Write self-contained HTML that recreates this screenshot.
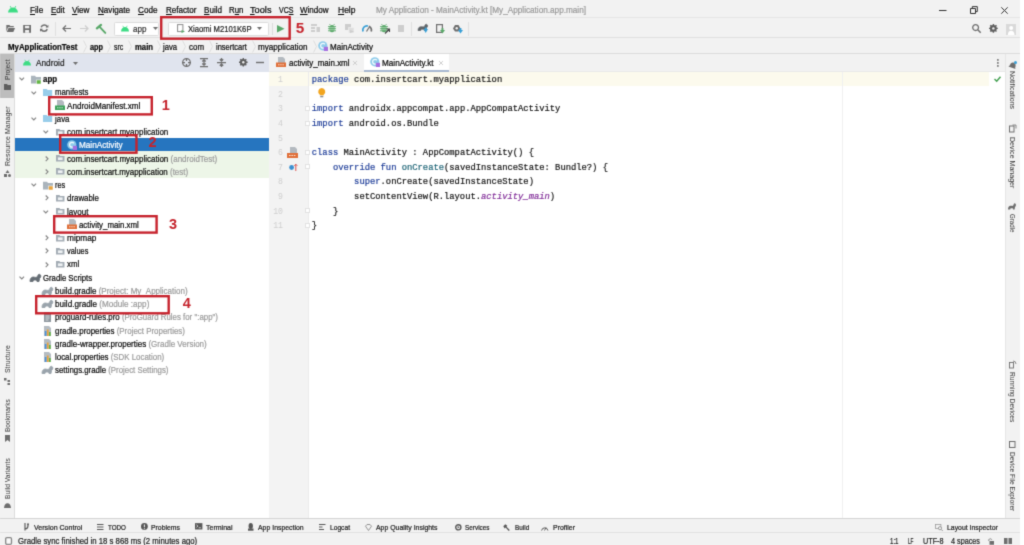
<!DOCTYPE html><html><head><meta charset="utf-8"><title>My Application - MainActivity.kt</title><style>
html,body{margin:0;padding:0}
body{width:1024px;height:545px;overflow:hidden;background:#fff;position:relative;font-family:"Liberation Sans",sans-serif;font-size:8.8px;color:#0a0a0a}
.a{position:absolute}
.t{position:absolute;white-space:pre;line-height:12px;height:12px;transform-origin:0 50%;-webkit-text-stroke:.22px currentColor}
.g{color:#9b9b9b}
.b{font-weight:bold}
.c{position:absolute;white-space:pre;font-family:"Liberation Mono",monospace;font-size:8.82px;line-height:14.61px;height:14.61px;color:#151515;left:311.800px;-webkit-text-stroke:.2px currentColor}
.k{color:#22409a}.f{color:#1f6577}.p{color:#83309a;font-style:italic}
.ln{position:absolute;font-family:"Liberation Mono",monospace;font-size:8.2px;line-height:14.61px;height:14.61px;color:#cfcfcf;width:14px;text-align:right;left:269px}
.vt{position:absolute;white-space:pre;line-height:12px;height:12px;color:#222}
.red{position:absolute;border:2.5px solid #c6222c;box-sizing:border-box}
.num{position:absolute;color:#c5232c;font-weight:bold;font-size:14.5px;line-height:16px;height:16px}
svg{position:absolute;overflow:visible}
#w{position:absolute;left:-8px;top:-8px;width:1040px;height:561px;background:#fff;filter:url(#sf)}
#c{position:absolute;left:8px;top:8px;width:1024px;height:545px}
u{text-decoration-thickness:.6px;text-underline-offset:1px}
</style></head><body><svg width="0" height="0" style="position:absolute"><filter id="sf" x="0" y="0" width="100%" height="100%" color-interpolation-filters="sRGB"><feConvolveMatrix order="3" kernelMatrix="0.0196 0.1008 0.0196 0.1008 0.5184 0.1008 0.0196 0.1008 0.0196" edgeMode="duplicate"/></filter></svg><div id="w"><div id="c">
<div class="a" style="left:-8px;top:-8px;width:1028px;height:561px;background:#f2f2f2;"></div>
<div class="a" style="left:0px;top:17.2px;width:1020px;height:1px;background:#e6e6e6;"></div>
<div class="a" style="left:0px;top:37px;width:1020px;height:1px;background:#e0e0e0;"></div>
<div class="a" style="left:0px;top:53px;width:1020px;height:1px;background:#dcdcdc;"></div>
<div class="a" style="left:0px;top:54px;width:14px;height:463.5px;background:#f2f2f2;"></div>
<div class="a" style="left:0px;top:54px;width:14px;height:44px;background:#bdbdbd;"></div>
<div class="a" style="left:14px;top:54px;width:0.8px;height:463.5px;background:#dcdcdc;"></div>
<div class="a" style="left:14.5px;top:54px;width:254.5px;height:463.5px;background:#fff;"></div>
<div class="a" style="left:14.5px;top:54px;width:254.5px;height:17.8px;background:#e0e4ee;"></div>
<div class="a" style="left:269px;top:54px;width:737px;height:463.5px;background:#fff;"></div>
<div class="a" style="left:269px;top:54px;width:737px;height:17.3px;background:#f2f2f2;"></div>
<div class="a" style="left:269px;top:71px;width:737px;height:1px;background:#e9e9e9;"></div>
<div class="a" style="left:269px;top:72px;width:38.5px;height:445.5px;background:#f3f3f3;"></div>
<div class="a" style="left:1006px;top:54px;width:14px;height:463.5px;background:#f2f2f2;"></div>
<div class="a" style="left:1005px;top:54px;width:1px;height:463.5px;background:#e6e6e6;"></div>
<div class="a" style="left:0px;top:517.5px;width:1020px;height:1px;background:#d4d4d4;"></div>
<div class="a" style="left:0px;top:532px;width:1020px;height:1px;background:#e2e2e2;"></div>
<span class="t " style="left:29.8px;top:3.5px;transform:scaleX(0.9304);"><u>F</u>ile</span>
<span class="t " style="left:50.5px;top:3.5px;transform:scaleX(0.9096);"><u>E</u>dit</span>
<span class="t " style="left:72px;top:3.5px;transform:scaleX(0.9249);"><u>V</u>iew</span>
<span class="t " style="left:98px;top:3.5px;transform:scaleX(0.9213);"><u>N</u>avigate</span>
<span class="t " style="left:138px;top:3.5px;transform:scaleX(0.9265);"><u>C</u>ode</span>
<span class="t " style="left:166px;top:3.5px;transform:scaleX(0.9169);"><u>R</u>efactor</span>
<span class="t " style="left:204px;top:3.5px;transform:scaleX(0.9194);"><u>B</u>uild</span>
<span class="t " style="left:229px;top:3.5px;transform:scaleX(0.8966);">R<u>u</u>n</span>
<span class="t " style="left:250px;top:3.5px;transform:scaleX(1.0464);"><u>T</u>ools</span>
<span class="t " style="left:279px;top:3.5px;transform:scaleX(0.8007);">VC<u>S</u></span>
<span class="t " style="left:300px;top:3.5px;transform:scaleX(0.9102);"><u>W</u>indow</span>
<span class="t " style="left:338px;top:3.5px;transform:scaleX(0.9664);"><u>H</u>elp</span>
<span class="t " style="left:376px;top:3.5px;transform:scaleX(0.9304);color:#9a9a9a">My Application - MainActivity.kt [My_Application.app.main]</span>
<svg style="left:8px;top:5px" width="10" height="8" viewBox="0 0 10 8"><path d="M0 7.500C.300 4.500 2.300 2.500 5 2.500S9.700 4.500 10 7.500z" fill="#3ddc84"/><path d="M2.200 1l1 2M7.800 1l-1 2" stroke="#3ddc84" stroke-width=".8"/></svg>
<svg style="left:938.5px;top:9.5px" width="8" height="1" viewBox="0 0 8 1"><path d="M0 .5h7.500" stroke="#333" stroke-width="1"/></svg>
<svg style="left:970px;top:6px" width="8" height="8" viewBox="0 0 8 8"><path d="M.5 2.500h5v5h-5zM2.300 2.300V.600h5v5H5.700" fill="none" stroke="#333" stroke-width="1"/></svg>
<svg style="left:1001px;top:6.5px" width="7" height="7" viewBox="0 0 7 7"><path d="M.3.300l6.400 6.400M6.700.300L.3 6.700" stroke="#333" stroke-width="1"/></svg>
<svg style="left:5.8px;top:25.099999999999998px" width="9.4" height="7" viewBox="0 0 10 8"><path d="M0 0h3.500l1 1.200h4v1.500H2L0 7.500z" fill="#6e6e6e"/><path d="M2.500 3.500H10L8 8H.5z" fill="#6e6e6e"/></svg>
<svg style="left:22.9px;top:24.5px" width="8.2" height="7.8" viewBox="0 0 9 9"><path d="M0 0h9v9H0z" fill="#6e6e6e"/><rect x="2" y="1" width="5" height="2.800" fill="#f2f2f2"/><rect x="2.200" y="5.800" width="4.600" height="3.200" fill="#f2f2f2"/></svg>
<svg style="left:40.3px;top:24.2px" width="8.4" height="8.4" viewBox="0 0 9 9"><path d="M7.800 3.200A3.600 3.600 0 0 0 1.200 3.500M1.200 5.800A3.600 3.600 0 0 0 7.800 5.500" fill="none" stroke="#6e6e6e" stroke-width="1.600"/><path d="M9 .800v3H6zM0 8.200v-3h3z" fill="#6e6e6e"/></svg>
<div class="a" style="left:54.6px;top:21.5px;width:0.8px;height:14px;background:#e0e0e0;"></div>
<svg style="left:61.5px;top:24.9px" width="9" height="7" viewBox="0 0 9 7"><path d="M9 3.500H1M4 .500L1 3.500l3 3" fill="none" stroke="#6e6e6e" stroke-width="1.200"/></svg>
<svg style="left:79.5px;top:24.9px" width="9" height="7" viewBox="0 0 9 7"><path d="M0 3.500H8M5 .500l3 3-3 3" fill="none" stroke="#cdcdcd" stroke-width="1.200"/></svg>
<svg style="left:96px;top:23.599999999999998px" width="10" height="10" viewBox="0 0 10 10"><path d="M.900 4.300L5 .900" stroke="#59a869" stroke-width="2.300" stroke-linecap="round"/><path d="M3.400 2.600L9.300 8.900" stroke="#59a869" stroke-width="1.900" stroke-linecap="round"/></svg>
<div class="a" style="left:113.8px;top:21.5px;width:45.2px;height:14.2px;background:#fff;border:.8px solid #dcdcdc;box-sizing:border-box;border-radius:1.500px"></div>
<svg style="left:120.8px;top:25.2px" width="8" height="6.5" viewBox="0 0 8 6.5"><path d="M0 6.500C.2 3.700 1.800 2 4 2S7.800 3.700 8 6.500z" fill="#3ddc84"/><path d="M1.800.800l.9 1.700M6.200.800l-.9 1.700" stroke="#3ddc84" stroke-width=".7"/></svg>
<span class="t " style="left:133px;top:22.9px;transform:scaleX(0.8798);font-size:9.2px;color:#333">app</span>
<svg style="left:152.5px;top:27.2px" width="5" height="3" viewBox="0 0 5 3"><path d="M0 0h5L2.500 3z" fill="#6e6e6e"/></svg>
<div class="a" style="left:168.3px;top:21.5px;width:100.7px;height:14.2px;background:#fff;border:.8px solid #dcdcdc;box-sizing:border-box;border-radius:1.500px"></div>
<svg style="left:176.5px;top:24.4px" width="8" height="9" viewBox="0 0 8 9"><rect x=".6" y=".6" width="5.300" height="7" fill="none" stroke="#8a8a8a" stroke-width="1"/><path d="M4.500 6l3.500 1.500L4.500 9z" fill="#59a869"/></svg>
<span class="t " style="left:188px;top:22.7px;transform:scaleX(0.8715);font-size:8.8px;color:#222">Xiaomi M2101K6P</span>
<svg style="left:257px;top:27.2px" width="5" height="3" viewBox="0 0 5 3"><path d="M0 0h5L2.500 3z" fill="#6e6e6e"/></svg>
<div class="a" style="left:272px;top:22.5px;width:0.8px;height:12px;background:#dcdcdc;"></div>
<svg style="left:277px;top:24.7px" width="7.5" height="7.4" viewBox="0 0 7.5 7.4"><path d="M0 0l7.500 3.700L0 7.400z" fill="#59a869"/></svg>
<svg style="left:310.5px;top:24.4px" width="9" height="8" viewBox="0 0 9 8"><path d="M0 0h6v2H0zM0 3h4v2H0zM0 6h4v2H0zM5.500 3h3.500v5H5.500z" fill="#cdcdcd"/></svg>
<svg style="left:328px;top:24.2px" width="8" height="8.4" viewBox="0 0 8 8.4"><path d="M0 2.600h8M0 4.700h8M0 6.800h8" stroke="#59a869" stroke-width=".9"/><path d="M2.300 1.200L1.500 0M5.700 1.200L6.500 0" stroke="#59a869" stroke-width=".8"/><ellipse cx="4" cy="4.600" rx="2.700" ry="3.700" fill="#59a869"/><path d="M1.500 3.650h5M1.500 5.750h5" stroke="#dff0e2" stroke-width=".55"/></svg>
<svg style="left:345px;top:23.9px" width="9" height="9" viewBox="0 0 9 9"><path d="M0 0h6v6H0z" fill="#cdcdcd"/><path d="M3.500 3.500h5.500v5.500H3.500z" fill="#dedede" stroke="#f2f2f2" stroke-width=".6"/><path d="M5 9V6l4 1.500z" fill="#cdcdcd"/></svg>
<svg style="left:361.5px;top:24.4px" width="10" height="8" viewBox="0 0 10 8"><path d="M1 7.500A4.200 4.200 0 0 1 6 2" fill="none" stroke="#389fd6" stroke-width="1.800"/><path d="M6.800 2.300A4.200 4.200 0 0 1 9.200 7.500" fill="none" stroke="#6e6e6e" stroke-width="1.800"/><path d="M4.500 7.500L7 3.500" stroke="#6e6e6e" stroke-width="1.200"/></svg>
<svg style="left:380px;top:24.2px" width="8" height="8.4" viewBox="0 0 8 8.4"><path d="M0 2.600h8M0 4.700h8M0 6.800h8" stroke="#59a869" stroke-width=".9"/><path d="M2.300 1.200L1.500 0M5.700 1.200L6.500 0" stroke="#59a869" stroke-width=".8"/><ellipse cx="4" cy="4.600" rx="2.700" ry="3.700" fill="#59a869"/><path d="M1.500 3.650h5M1.500 5.750h5" stroke="#dff0e2" stroke-width=".55"/></svg>
<svg style="left:385px;top:28.9px" width="5" height="4.5" viewBox="0 0 5 4.5"><path d="M0 4.500L4.500 0M1.500 0h3v3" fill="none" stroke="#444" stroke-width="1.100"/></svg>
<div class="a" style="left:397.5px;top:25.099999999999998px;width:6.6px;height:6.6px;background:#cdcdcd;"></div>
<div class="a" style="left:411.3px;top:21.5px;width:0.8px;height:14px;background:#e0e0e0;"></div>
<svg style="left:418px;top:24.4px" width="10" height="9" viewBox="0 0 10 9"><path d="M0 6.500C0 3.500 1.800 2.200 4 2.800 5.800 3.300 6.700 2.600 7.100 1 7.400.2 8.700 0 9.300.9 10 2 9.300 3.400 8.400 4L8 6.500H6.200L5.800 5.200H3.100L2.700 6.500z" fill="#5f6468" stroke="#5f6468" stroke-width=".7"/><path d="M5.500 5h4.500L7.700 9z" fill="#389fd6"/><rect x="6.800" y="3.500" width="1.800" height="2" fill="#389fd6"/></svg>
<svg style="left:436px;top:23.9px" width="9" height="9.5" viewBox="0 0 9 9.5"><rect x=".6" y=".6" width="5.800" height="7.800" fill="none" stroke="#6e6e6e" stroke-width="1.200"/><path d="M4 6h5L6.500 9.500z" fill="#59a869"/><rect x="5.600" y="4" width="1.800" height="2.200" fill="#59a869"/></svg>
<svg style="left:452.5px;top:23.9px" width="10" height="9.5" viewBox="0 0 10 9.5"><path d="M0 4.500L2 1h3.500l2 3.500-2 3H2z" fill="#6e6e6e"/><circle cx="3.700" cy="4.300" r="1.200" fill="#f2f2f2"/><path d="M5 6h5L7.500 9.500z" fill="#389fd6"/><rect x="6.600" y="4" width="1.800" height="2.200" fill="#389fd6"/></svg>
<div class="a" style="left:467.7px;top:21.5px;width:0.8px;height:14px;background:#e0e0e0;"></div>
<svg style="left:971.5px;top:23.9px" width="9" height="9" viewBox="0 0 9 9"><circle cx="3.600" cy="3.600" r="2.900" fill="none" stroke="#6e6e6e" stroke-width="1.300"/><path d="M5.800 5.800L8.700 8.700" stroke="#6e6e6e" stroke-width="1.500"/></svg>
<svg style="left:988.6px;top:24.099999999999998px" width="8.8" height="8.8" viewBox="0 0 8 8"><circle cx="4" cy="4" r="2.300" fill="none" stroke="#5f5f5f" stroke-width="1.700"/><path d="M4 0v8M0 4h8M1.200 1.200l5.600 5.600M6.800 1.200L1.200 6.800" stroke="#5f5f5f" stroke-width="1.300"/><circle cx="4" cy="4" r="1.100" fill="#f2f2f2"/></svg>
<div class="a" style="left:1005.5px;top:23.5px;width:10.3px;height:11px;background:#d9d9d9;"></div>
<svg style="left:1005.5px;top:23.5px" width="10.3" height="11" viewBox="0 0 10.3 11"><circle cx="5.150" cy="4" r="2" fill="#fff"/><path d="M1.800 11C1.800 8 3.300 6.800 5.150 6.800S8.500 8 8.500 11z" fill="#fff"/></svg>
<span class="t b" style="left:8.3px;top:40.9px;transform:scaleX(0.8948);">MyApplicationTest</span>
<span class="t b" style="left:89.7px;top:40.9px;transform:scaleX(0.8312);">app</span>
<span class="t " style="left:113.8px;top:40.9px;transform:scaleX(0.7840);">src</span>
<span class="t b" style="left:134.5px;top:40.9px;transform:scaleX(0.8760);">main</span>
<span class="t " style="left:163.3px;top:40.9px;transform:scaleX(0.8736);">java</span>
<span class="t " style="left:188.5px;top:40.9px;transform:scaleX(0.9023);">com</span>
<span class="t " style="left:216px;top:40.9px;transform:scaleX(0.8511);">insertcart</span>
<span class="t " style="left:258.3px;top:40.9px;transform:scaleX(0.9201);">myapplication</span>
<span class="t " style="left:330px;top:40.9px;transform:scaleX(0.9161);">MainActivity</span>
<svg style="left:82.5px;top:40px" width="4" height="13" viewBox="0 0 4 13"><path d="M.5.500l3 6-3 6" fill="none" stroke="#dadada" stroke-width=".9"/></svg>
<svg style="left:107px;top:40px" width="4" height="13" viewBox="0 0 4 13"><path d="M.5.500l3 6-3 6" fill="none" stroke="#dadada" stroke-width=".9"/></svg>
<svg style="left:127.5px;top:40px" width="4" height="13" viewBox="0 0 4 13"><path d="M.5.500l3 6-3 6" fill="none" stroke="#dadada" stroke-width=".9"/></svg>
<svg style="left:157px;top:40px" width="4" height="13" viewBox="0 0 4 13"><path d="M.5.500l3 6-3 6" fill="none" stroke="#dadada" stroke-width=".9"/></svg>
<svg style="left:182px;top:40px" width="4" height="13" viewBox="0 0 4 13"><path d="M.5.500l3 6-3 6" fill="none" stroke="#dadada" stroke-width=".9"/></svg>
<svg style="left:208.5px;top:40px" width="4" height="13" viewBox="0 0 4 13"><path d="M.5.500l3 6-3 6" fill="none" stroke="#dadada" stroke-width=".9"/></svg>
<svg style="left:251.5px;top:40px" width="4" height="13" viewBox="0 0 4 13"><path d="M.5.500l3 6-3 6" fill="none" stroke="#dadada" stroke-width=".9"/></svg>
<svg style="left:312.5px;top:40px" width="4" height="13" viewBox="0 0 4 13"><path d="M.5.500l3 6-3 6" fill="none" stroke="#dadada" stroke-width=".9"/></svg>
<svg style="left:317.8px;top:41.0px" width="10" height="10" viewBox="0 0 10 10"><circle cx="4.800" cy="4.800" r="4.600" fill="#8ecbea"/><path d="M6.800 3.200A2.400 2.400 0 1 0 6.800 6.400" fill="none" stroke="#f2fafe" stroke-width="1.300"/><path d="M5.800 5.800h4.200v4.200H5.800z" fill="#a56fe0"/></svg>
<svg style="left:22.5px;top:59.3px" width="8" height="6.5" viewBox="0 0 8 6.5"><path d="M0 6.500C.2 3.700 1.800 2 4 2S7.800 3.700 8 6.500z" fill="#3ddc84"/><path d="M1.800.800l.9 1.700M6.200.800l-.9 1.700" stroke="#3ddc84" stroke-width=".7"/></svg>
<span class="t " style="left:36px;top:56.8px;transform:scaleX(0.8616);font-size:9.6px;color:#222">Android</span>
<svg style="left:72.5px;top:61.5px" width="5" height="3" viewBox="0 0 5 3"><path d="M0 0h5L2.500 3z" fill="#6e6e6e"/></svg>
<svg style="left:182px;top:58px" width="9" height="9" viewBox="0 0 9 9"><circle cx="4.500" cy="4.500" r="3.800" fill="none" stroke="#6e6e6e" stroke-width="1.25"/><path d="M4.500 0v3M4.500 6v3M0 4.500h3M6 4.500h3" stroke="#6e6e6e" stroke-width="1.25"/></svg>
<svg style="left:200px;top:58px" width="8" height="9" viewBox="0 0 8 9"><path d="M0 .500h8M0 8.500h8M4 2v5M2.300 3.500L4 1.800l1.700 1.700M2.300 5.500L4 7.200l1.700-1.700" fill="none" stroke="#6e6e6e" stroke-width="1.25"/></svg>
<svg style="left:216.5px;top:58px" width="9" height="9" viewBox="0 0 9 9"><path d="M0 4.500h9M4.500 0v3M4.500 6v3M2.800 1.300l1.700 1.700 1.700-1.700M2.800 7.700l1.700-1.700 1.700 1.700" fill="none" stroke="#6e6e6e" stroke-width="1.25"/></svg>
<svg style="left:238.8px;top:58.2px" width="8.6" height="8.6" viewBox="0 0 8 8"><circle cx="4" cy="4" r="2.300" fill="none" stroke="#5f5f5f" stroke-width="1.700"/><path d="M4 0v8M0 4h8M1.200 1.200l5.600 5.600M6.800 1.200L1.200 6.800" stroke="#5f5f5f" stroke-width="1.300"/><circle cx="4" cy="4" r="1.100" fill="#f2f2f2"/></svg>
<svg style="left:256.3px;top:62px" width="8" height="1" viewBox="0 0 8 1"><path d="M0 .5h8" stroke="#6e6e6e" stroke-width="1.400"/></svg>
<div class="a" style="left:14.5px;top:151.24px;width:254.5px;height:26.48px;background:#edf6e8;"></div>
<div class="a" style="left:14.5px;top:138.0px;width:254.5px;height:13.24px;background:#2675bf;"></div>
<svg style="left:19.1px;top:77.42px" width="5.6" height="4" viewBox="0 0 5.6 4"><path d="M.5.700 2.800 3 5.100.700" fill="none" stroke="#808080" stroke-width="1.100"/></svg>
<svg style="left:30.900000000000002px;top:74.62px" width="10" height="9" viewBox="0 0 10 9"><path d="M0 .800h4l1 1.200h5v6.500H0z" fill="#aab4bc"/><rect x="5.500" y="5" width="4.500" height="4" fill="#62b543" stroke="#fff" stroke-width=".5"/></svg>
<span class="t b" style="left:42.7px;top:73.12px;transform:scaleX(0.9015);">app</span>
<svg style="left:31.25px;top:90.66px" width="5.6" height="4" viewBox="0 0 5.6 4"><path d="M.5.700 2.800 3 5.100.700" fill="none" stroke="#808080" stroke-width="1.100"/></svg>
<svg style="left:43.349999999999994px;top:88.66px" width="9.2" height="7.1" viewBox="0 .8 10 7.700"><path d="M0 .800h4l1 1.200h5v6.500H0z" fill="#98cdea"/></svg>
<span class="t " style="left:54.85px;top:86.36px;transform:scaleX(0.8883);">manifests</span>
<svg style="left:55.2px;top:100.10000000000001px" width="10" height="10" viewBox="0 0 10 10"><path d="M2 0h5l2 2v5H2z" fill="#b3b9bf"/><rect x="0" y="5.500" width="10" height="4.500" fill="#3da35a"/><path d="M2 7.800h6" stroke="#d9efdf" stroke-width=".9" stroke-dasharray="1.500 .7"/></svg>
<span class="t " style="left:67.0px;top:99.60000000000001px;transform:scaleX(0.9197);">AndroidManifest.xml</span>
<svg style="left:31.25px;top:117.14px" width="5.6" height="4" viewBox="0 0 5.6 4"><path d="M.5.700 2.800 3 5.100.700" fill="none" stroke="#808080" stroke-width="1.100"/></svg>
<svg style="left:43.349999999999994px;top:115.14px" width="9.2" height="7.1" viewBox="0 .8 10 7.700"><path d="M0 .800h4l1 1.200h5v6.500H0z" fill="#98cdea"/></svg>
<span class="t " style="left:54.85px;top:112.84px;transform:scaleX(0.8953);">java</span>
<svg style="left:43.400000000000006px;top:130.38px" width="5.6" height="4" viewBox="0 0 5.6 4"><path d="M.5.700 2.800 3 5.100.700" fill="none" stroke="#808080" stroke-width="1.100"/></svg>
<svg style="left:55.800000000000004px;top:128.67999999999998px" width="8.5" height="6.5" viewBox="0 .8 10 7.700"><path d="M0 .800h4l1 1.200h5v6.500H0z" fill="#a3acb4"/><rect x="2.200" y="3.600" width="5.600" height="3.200" fill="#eef1f3"/></svg>
<span class="t " style="left:67.0px;top:126.07999999999998px;transform:scaleX(0.9088);">com.insertcart.myapplication</span>
<svg style="left:67.35000000000001px;top:140.32px" width="10" height="10" viewBox="0 0 10 10"><circle cx="4.800" cy="4.800" r="4.600" fill="#8ecbea"/><path d="M6.800 3.200A2.400 2.400 0 1 0 6.800 6.400" fill="none" stroke="#f2fafe" stroke-width="1.300"/><path d="M5.800 5.800h4.200v4.200H5.800z" fill="#a56fe0"/></svg>
<span class="t " style="left:79.15px;top:139.32px;transform:scaleX(0.9300);color:#fff">MainActivity</span>
<svg style="left:44.7px;top:155.76px" width="4" height="5.6" viewBox="0 0 4 5.6"><path d="M.700.500 3 2.800.700 5.100" fill="none" stroke="#808080" stroke-width="1.100"/></svg>
<svg style="left:55.800000000000004px;top:155.16px" width="8.5" height="6.5" viewBox="0 .8 10 7.700"><path d="M0 .800h4l1 1.200h5v6.500H0z" fill="#a3acb4"/><rect x="2.200" y="3.600" width="5.600" height="3.200" fill="#eef1f3"/></svg>
<span class="t " style="left:67.0px;top:152.56px;transform:scaleX(0.9088);">com.insertcart.myapplication<span class="g"> (androidTest)</span></span>
<svg style="left:44.7px;top:169.0px" width="4" height="5.6" viewBox="0 0 4 5.6"><path d="M.700.500 3 2.800.700 5.100" fill="none" stroke="#808080" stroke-width="1.100"/></svg>
<svg style="left:55.800000000000004px;top:168.4px" width="8.5" height="6.5" viewBox="0 .8 10 7.700"><path d="M0 .800h4l1 1.200h5v6.500H0z" fill="#a3acb4"/><rect x="2.200" y="3.600" width="5.600" height="3.200" fill="#eef1f3"/></svg>
<span class="t " style="left:67.0px;top:165.8px;transform:scaleX(0.9040);">com.insertcart.myapplication<span class="g"> (test)</span></span>
<svg style="left:31.25px;top:183.34px" width="5.6" height="4" viewBox="0 0 5.6 4"><path d="M.5.700 2.800 3 5.100.700" fill="none" stroke="#808080" stroke-width="1.100"/></svg>
<svg style="left:43.05px;top:180.54px" width="10" height="9" viewBox="0 0 10 9"><path d="M0 .800h4l1 1.200h5v6.500H0z" fill="#aab4bc"/><rect x="5.500" y="5" width="4.500" height="4" fill="#e8a33d" stroke="#fff" stroke-width=".5"/></svg>
<span class="t " style="left:54.85px;top:179.04px;transform:scaleX(0.8296);">res</span>
<svg style="left:44.7px;top:195.47999999999996px" width="4" height="5.6" viewBox="0 0 4 5.6"><path d="M.700.500 3 2.800.700 5.100" fill="none" stroke="#808080" stroke-width="1.100"/></svg>
<svg style="left:55.800000000000004px;top:194.87999999999997px" width="8.5" height="6.5" viewBox="0 .8 10 7.700"><path d="M0 .800h4l1 1.200h5v6.500H0z" fill="#a3acb4"/><rect x="2.200" y="3.600" width="5.600" height="3.200" fill="#eef1f3"/></svg>
<span class="t " style="left:67.0px;top:192.27999999999997px;transform:scaleX(0.8963);">drawable</span>
<svg style="left:43.400000000000006px;top:209.82px" width="5.6" height="4" viewBox="0 0 5.6 4"><path d="M.5.700 2.800 3 5.100.700" fill="none" stroke="#808080" stroke-width="1.100"/></svg>
<svg style="left:55.800000000000004px;top:208.11999999999998px" width="8.5" height="6.5" viewBox="0 .8 10 7.700"><path d="M0 .800h4l1 1.200h5v6.500H0z" fill="#a3acb4"/><rect x="2.200" y="3.600" width="5.600" height="3.200" fill="#eef1f3"/></svg>
<span class="t " style="left:67.0px;top:205.51999999999998px;transform:scaleX(0.9112);">layout</span>
<svg style="left:67.35000000000001px;top:219.26px" width="10" height="10" viewBox="0 0 10 10"><path d="M2 0h5l2 2v5H2z" fill="#b3b9bf"/><rect x="0" y="5.500" width="10" height="4.500" fill="#e0703a"/><path d="M2 7.800h6" stroke="#fbe3d6" stroke-width=".9" stroke-dasharray="1.500 .7"/></svg>
<span class="t " style="left:79.15px;top:218.76px;transform:scaleX(0.8935);">activity_main.xml</span>
<svg style="left:44.7px;top:235.2px" width="4" height="5.6" viewBox="0 0 4 5.6"><path d="M.700.500 3 2.800.700 5.100" fill="none" stroke="#808080" stroke-width="1.100"/></svg>
<svg style="left:55.800000000000004px;top:234.6px" width="8.5" height="6.5" viewBox="0 .8 10 7.700"><path d="M0 .800h4l1 1.200h5v6.500H0z" fill="#a3acb4"/><rect x="2.200" y="3.600" width="5.600" height="3.200" fill="#eef1f3"/></svg>
<span class="t " style="left:67.0px;top:232.0px;transform:scaleX(0.9394);">mipmap</span>
<svg style="left:44.7px;top:248.44px" width="4" height="5.6" viewBox="0 0 4 5.6"><path d="M.700.500 3 2.800.700 5.100" fill="none" stroke="#808080" stroke-width="1.100"/></svg>
<svg style="left:55.800000000000004px;top:247.84px" width="8.5" height="6.5" viewBox="0 .8 10 7.700"><path d="M0 .800h4l1 1.200h5v6.500H0z" fill="#a3acb4"/><rect x="2.200" y="3.600" width="5.600" height="3.200" fill="#eef1f3"/></svg>
<span class="t " style="left:67.0px;top:245.24px;transform:scaleX(0.8413);">values</span>
<svg style="left:44.7px;top:261.68px" width="4" height="5.6" viewBox="0 0 4 5.6"><path d="M.700.500 3 2.800.700 5.100" fill="none" stroke="#808080" stroke-width="1.100"/></svg>
<svg style="left:55.800000000000004px;top:261.08000000000004px" width="8.5" height="6.5" viewBox="0 .8 10 7.700"><path d="M0 .800h4l1 1.200h5v6.500H0z" fill="#a3acb4"/><rect x="2.200" y="3.600" width="5.600" height="3.200" fill="#eef1f3"/></svg>
<span class="t " style="left:67.0px;top:258.48px;transform:scaleX(0.8913);">xml</span>
<svg style="left:19.1px;top:276.02px" width="5.6" height="4" viewBox="0 0 5.6 4"><path d="M.5.700 2.800 3 5.100.700" fill="none" stroke="#808080" stroke-width="1.100"/></svg>
<svg style="left:29.900000000000002px;top:273.71999999999997px" width="11" height="8" viewBox="0 0 11 8"><path d="M0 7.500C0 4 2 2.500 4.500 3.200 6.500 3.800 7.500 3 8 1.200 8.300.2 9.800 0 10.500 1c.8 1.200 0 2.800-1 3.500L9 7.500H7l-.5-1.500h-3L3 7.500z" fill="#666e75" stroke="#666e75" stroke-width=".9" stroke-linejoin="round"/></svg>
<span class="t " style="left:42.7px;top:271.71999999999997px;transform:scaleX(0.8792);">Gradle Scripts</span>
<svg style="left:42.05px;top:286.96px" width="11" height="8" viewBox="0 0 11 8"><path d="M0 7.500C0 4 2 2.500 4.500 3.200 6.500 3.800 7.500 3 8 1.200 8.300.2 9.800 0 10.500 1c.8 1.200 0 2.800-1 3.500L9 7.500H7l-.5-1.500h-3L3 7.500z" fill="#9aa4ac" stroke="#9aa4ac" stroke-width=".9" stroke-linejoin="round"/></svg>
<span class="t " style="left:54.85px;top:284.96px;transform:scaleX(0.9103);">build.gradle<span class="g"> (Project: My_Application)</span></span>
<svg style="left:42.05px;top:300.2px" width="11" height="8" viewBox="0 0 11 8"><path d="M0 7.500C0 4 2 2.500 4.500 3.200 6.500 3.800 7.500 3 8 1.200 8.300.2 9.800 0 10.500 1c.8 1.200 0 2.800-1 3.500L9 7.500H7l-.5-1.500h-3L3 7.500z" fill="#9aa4ac" stroke="#9aa4ac" stroke-width=".9" stroke-linejoin="round"/></svg>
<span class="t " style="left:54.85px;top:298.2px;transform:scaleX(0.9230);">build.gradle<span class="g"> (Module :app)</span></span>
<svg style="left:43.05px;top:312.44px" width="9" height="10" viewBox="0 0 9 10"><path d="M1 0h5l2 2v8H1z" fill="#8e979e"/><path d="M2.500 4h4M2.500 6h4M2.500 8h3" stroke="#e8eaec" stroke-width=".8"/></svg>
<span class="t " style="left:54.85px;top:311.44px;transform:scaleX(0.8939);">proguard-rules.pro<span class="g"> (ProGuard Rules for ":app")</span></span>
<svg style="left:43.05px;top:325.68px" width="9" height="10" viewBox="0 0 9 10"><path d="M1 0h5l2 2v8H1z" fill="#b5bcc2"/><rect x="1.800" y="5" width="1.700" height="5" fill="#4a90d9"/><rect x="3.900" y="3.500" width="1.700" height="6.500" fill="#e8a33d"/><rect x="6" y="6" width="1.700" height="4" fill="#62b543"/></svg>
<span class="t " style="left:54.85px;top:324.68px;transform:scaleX(0.9010);">gradle.properties<span class="g"> (Project Properties)</span></span>
<svg style="left:43.05px;top:338.92px" width="9" height="10" viewBox="0 0 9 10"><path d="M1 0h5l2 2v8H1z" fill="#b5bcc2"/><rect x="1.800" y="5" width="1.700" height="5" fill="#4a90d9"/><rect x="3.900" y="3.500" width="1.700" height="6.500" fill="#e8a33d"/><rect x="6" y="6" width="1.700" height="4" fill="#62b543"/></svg>
<span class="t " style="left:54.85px;top:337.92px;transform:scaleX(0.9100);">gradle-wrapper.properties<span class="g"> (Gradle Version)</span></span>
<svg style="left:43.05px;top:352.16px" width="9" height="10" viewBox="0 0 9 10"><path d="M1 0h5l2 2v8H1z" fill="#b5bcc2"/><rect x="1.800" y="5" width="1.700" height="5" fill="#4a90d9"/><rect x="3.900" y="3.500" width="1.700" height="6.500" fill="#e8a33d"/><rect x="6" y="6" width="1.700" height="4" fill="#62b543"/></svg>
<span class="t " style="left:54.85px;top:351.16px;transform:scaleX(0.8965);">local.properties<span class="g"> (SDK Location)</span></span>
<svg style="left:42.05px;top:366.40000000000003px" width="11" height="8" viewBox="0 0 11 8"><path d="M0 7.500C0 4 2 2.500 4.500 3.200 6.500 3.800 7.500 3 8 1.200 8.300.2 9.800 0 10.500 1c.8 1.200 0 2.800-1 3.500L9 7.500H7l-.5-1.500h-3L3 7.500z" fill="#9aa4ac" stroke="#9aa4ac" stroke-width=".9" stroke-linejoin="round"/></svg>
<span class="t " style="left:54.85px;top:364.40000000000003px;transform:scaleX(0.8923);">settings.gradle<span class="g"> (Project Settings)</span></span>
<div class="a" style="left:363.5px;top:54px;width:85px;height:17.3px;background:#fff;"></div>
<div class="a" style="left:363.5px;top:69.5px;width:85px;height:2px;background:#a7b8d0;"></div>
<svg style="left:275.5px;top:57.0px" width="10" height="10" viewBox="0 0 10 10"><path d="M2 0h5l2 2v5H2z" fill="#b3b9bf"/><rect x="0" y="5.500" width="10" height="4.500" fill="#e0703a"/><path d="M2 7.800h6" stroke="#fbe3d6" stroke-width=".9" stroke-dasharray="1.500 .7"/></svg>
<span class="t " style="left:288.5px;top:56.5px;transform:scaleX(0.9032);">activity_main.xml</span>
<svg style="left:369.5px;top:57.0px" width="10" height="10" viewBox="0 0 10 10"><circle cx="4.800" cy="4.800" r="4.600" fill="#8ecbea"/><path d="M6.800 3.200A2.400 2.400 0 1 0 6.800 6.400" fill="none" stroke="#f2fafe" stroke-width="1.300"/><path d="M5.800 5.800h4.200v4.200H5.800z" fill="#a56fe0"/></svg>
<span class="t " style="left:382px;top:56.5px;transform:scaleX(0.9269);">MainActivity.kt</span>
<svg style="left:353.3px;top:60.8px" width="3.5" height="3.5" viewBox="0 0 3.5 3.5"><path d="M0 0l4 4M4 0L0 4" stroke="#c4c4c4" stroke-width=".8"/></svg>
<svg style="left:439px;top:60.8px" width="3.5" height="3.5" viewBox="0 0 3.5 3.5"><path d="M0 0l4 4M4 0L0 4" stroke="#c4c4c4" stroke-width=".8"/></svg>
<svg style="left:996.9px;top:59.3px" width="1.8" height="1.8" viewBox="0 0 1.8 1.8"><circle cx=".9" cy=".9" r=".85" fill="#5c5c5c"/></svg>
<svg style="left:996.9px;top:62.2px" width="1.8" height="1.8" viewBox="0 0 1.8 1.8"><circle cx=".9" cy=".9" r=".85" fill="#5c5c5c"/></svg>
<svg style="left:996.9px;top:65.1px" width="1.8" height="1.8" viewBox="0 0 1.8 1.8"><circle cx=".9" cy=".9" r=".85" fill="#5c5c5c"/></svg>
<div class="a" style="left:269px;top:72.0px;width:720px;height:14.11px;background:#fcfaed;"></div>
<div class="a" style="left:307.5px;top:72px;width:0.8px;height:445.5px;background:#ebebeb;"></div>
<div class="a" style="left:842px;top:72px;width:1px;height:445.5px;background:#f0f0f0;"></div>
<span class="ln" style="top:73.2px">1</span>
<span class="c" style="top:73.2px"><span class="k">package</span> com.insertcart.myapplication</span>
<span class="ln" style="top:87.81px">2</span>
<span class="ln" style="top:102.42px">3</span>
<span class="c" style="top:102.42px"><span class="k">import</span> androidx.appcompat.app.AppCompatActivity</span>
<span class="ln" style="top:117.03px">4</span>
<span class="c" style="top:117.03px"><span class="k">import</span> android.os.Bundle</span>
<span class="ln" style="top:131.64px">5</span>
<span class="ln" style="top:146.25px">6</span>
<span class="c" style="top:146.25px"><span class="k">class</span> MainActivity : AppCompatActivity() {</span>
<span class="ln" style="top:160.85999999999999px">7</span>
<span class="c" style="top:160.85999999999999px">    <span class="k">override fun</span> <span class="f">onCreate</span>(savedInstanceState: Bundle?) {</span>
<span class="ln" style="top:175.46999999999997px">8</span>
<span class="c" style="top:175.46999999999997px">        <span class="k">super</span>.onCreate(savedInstanceState)</span>
<span class="ln" style="top:190.07999999999998px">9</span>
<span class="c" style="top:190.07999999999998px">        setContentView(R.layout.<span class="p">activity_main</span>)</span>
<span class="ln" style="top:204.69px">10</span>
<span class="c" style="top:204.69px">    }</span>
<span class="ln" style="top:219.29999999999998px">11</span>
<span class="c" style="top:219.29999999999998px">}</span>
<svg style="left:317.5px;top:87.5px" width="7.5" height="9.5" viewBox="0 0 7.5 9.5"><path d="M3.750 0A3.600 3.600 0 0 1 5.800 6.500V7.300H1.700V6.500A3.600 3.600 0 0 1 3.750 0z" fill="#f2a51f"/><rect x="2.200" y="7.800" width="3.100" height="1.500" fill="#8c8c8c"/></svg>
<svg style="left:993.5px;top:76px" width="7" height="6" viewBox="0 0 7 6"><path d="M.5 3l2.200 2.200L6.500.800" fill="none" stroke="#3f9e4d" stroke-width="1.400"/></svg>
<div class="a" style="left:304.5px;top:106.025px;width:5px;height:5px;background:#fff;border:.7px solid #e2e2e2;box-sizing:border-box"></div>
<div class="a" style="left:304.5px;top:120.63499999999999px;width:5px;height:5px;background:#fff;border:.7px solid #e2e2e2;box-sizing:border-box"></div>
<div class="a" style="left:304.5px;top:149.85500000000002px;width:5px;height:5px;background:#fff;border:.7px solid #e2e2e2;box-sizing:border-box"></div>
<div class="a" style="left:304.5px;top:164.465px;width:5px;height:5px;background:#fff;border:.7px solid #e2e2e2;box-sizing:border-box"></div>
<div class="a" style="left:304.5px;top:208.29500000000002px;width:5px;height:5px;background:#fff;border:.7px solid #e2e2e2;box-sizing:border-box"></div>
<div class="a" style="left:304.5px;top:222.905px;width:5px;height:5px;background:#fff;border:.7px solid #e2e2e2;box-sizing:border-box"></div>
<svg style="left:287px;top:146.85500000000002px" width="11" height="11" viewBox="0 0 11 11"><path d="M3 0h5l2 2v5H3z" fill="#b3b9bf"/><rect x="0" y="6" width="11" height="5" fill="#e0703a"/><path d="M2 8.500h7" stroke="#fbe3d6" stroke-width="1" stroke-dasharray="1.600 .800"/></svg>
<svg style="left:288.5px;top:163.965px" width="9" height="8" viewBox="0 0 9 8"><circle cx="2.600" cy="3.500" r="2.400" fill="#3b8fd0"/><path d="M6.800 0v7M5.300 1.800L6.800.300l1.500 1.500" fill="none" stroke="#d9534f" stroke-width="1"/></svg>
<span class="t " style="left:33.7px;top:521.6px;transform:scaleX(0.8952);font-size:7.9px;color:#222">Version Control</span>
<span class="t " style="left:108px;top:521.6px;transform:scaleX(0.7945);font-size:7.9px;color:#222">TODO</span>
<span class="t " style="left:151px;top:521.6px;transform:scaleX(0.8701);font-size:7.9px;color:#222">Problems</span>
<span class="t " style="left:206px;top:521.6px;transform:scaleX(0.8884);font-size:7.9px;color:#222">Terminal</span>
<span class="t " style="left:258px;top:521.6px;transform:scaleX(0.8754);font-size:7.9px;color:#222">App Inspection</span>
<span class="t " style="left:329.5px;top:521.6px;transform:scaleX(0.8438);font-size:7.9px;color:#222">Logcat</span>
<span class="t " style="left:376px;top:521.6px;transform:scaleX(0.8762);font-size:7.9px;color:#222">App Quality Insights</span>
<span class="t " style="left:465px;top:521.6px;transform:scaleX(0.8095);font-size:7.9px;color:#222">Services</span>
<span class="t " style="left:514.5px;top:521.6px;transform:scaleX(0.8093);font-size:7.9px;color:#222">Build</span>
<span class="t " style="left:552.5px;top:521.6px;transform:scaleX(0.8800);font-size:7.9px;color:#222">Profiler</span>
<span class="t " style="left:946.7px;top:521.6px;transform:scaleX(0.8707);font-size:7.9px;color:#222">Layout Inspector</span>
<svg style="left:23.5px;top:523.3px" width="5" height="7.5" viewBox="0 0 5 7.5"><path d="M1 0v7.500M1 5.800C3.500 5.800 4 4.500 4 2" fill="none" stroke="#5a5a5a" stroke-width="1.200"/><circle cx="4" cy="1.300" r="1" fill="#5a5a5a"/></svg>
<svg style="left:97px;top:524px" width="6.5" height="6" viewBox="0 0 6.5 6"><path d="M0 .500h6.500M0 3h6.500M0 5.500h6.500" stroke="#585858" stroke-width="1"/></svg>
<svg style="left:140.7px;top:523.4px" width="6.8" height="6.8" viewBox="0 0 6 6"><circle cx="3" cy="3" r="3" fill="#585858"/><path d="M3 1.300v2.300M3 4.300v.8" stroke="#f2f2f2" stroke-width=".9"/></svg>
<svg style="left:195px;top:523.4px" width="7.4" height="6.6" viewBox="0 0 7 6"><rect width="7" height="6" fill="#585858"/><path d="M1.300 1.500l1.500 1.300-1.500 1.300M3.500 4.400h2" fill="none" stroke="#f2f2f2" stroke-width=".7"/></svg>
<svg style="left:247.5px;top:523px" width="5.5" height="8" viewBox="0 0 5.5 8"><ellipse cx="2.750" cy="3" rx="2.200" ry="3" fill="#585858"/><rect x="0" y="5.500" width="5.500" height="2.200" fill="#585858"/></svg>
<svg style="left:318.7px;top:524px" width="6.5" height="6" viewBox="0 0 6.5 6"><path d="M0 .500h6.500M0 3h3.500M0 5.500h5" stroke="#585858" stroke-width="1"/></svg>
<svg style="left:365px;top:523.5px" width="7" height="7" viewBox="0 0 7 7"><path d="M.5 2.200L2 .5h3L6.500 2.200 3.500 6.500z" fill="none" stroke="#8a8a8a" stroke-width=".9"/></svg>
<svg style="left:454.5px;top:523.7px" width="6.6" height="6.6" viewBox="0 0 6.6 6.6"><circle cx="3.300" cy="3.300" r="2.600" fill="none" stroke="#585858" stroke-width="1.400"/><path d="M2.600 2v2.600l2-1.300z" fill="#585858"/></svg>
<svg style="left:503px;top:523.5px" width="7" height="7" viewBox="0 0 7 7"><path d="M.3 2.300L2.300.3l2 1.500-.8.900L6.800 6 5.800 7 2.600 3.600l-.9.800z" fill="#585858"/></svg>
<svg style="left:541px;top:524.5px" width="7.5" height="5.5" viewBox="0 0 7.5 5.5"><path d="M.6 5.500A3.200 3.200 0 0 1 6.900 5.500" fill="none" stroke="#585858" stroke-width="1"/><path d="M3.500 5.500L5 2.500" stroke="#585858" stroke-width=".9"/></svg>
<svg style="left:935px;top:523.5px" width="8" height="7" viewBox="0 0 8 7"><rect x=".4" y=".4" width="5.500" height="4" fill="none" stroke="#9a9a9a" stroke-width=".8"/><circle cx="5" cy="4.200" r="1.600" fill="#f2f2f2" stroke="#8a8a8a" stroke-width=".8"/><path d="M6.200 5.400L7.800 7" stroke="#8a8a8a" stroke-width=".9"/></svg>
<svg style="left:4.5px;top:537px" width="7.2" height="8" viewBox="0 0 7.2 8"><rect x=".7" y=".7" width="5.800" height="6.600" rx="1.200" fill="#fafafa" stroke="#858585" stroke-width="1.300"/></svg>
<span class="t " style="left:18.3px;top:535px;transform:scaleX(0.8831);color:#222">Gradle sync finished in 18 s 868 ms (2 minutes ago)</span>
<span class="t " style="left:890px;top:535px;transform:scaleX(0.6948);color:#222">1:1</span>
<span class="t " style="left:908px;top:535px;transform:scaleX(0.5350);color:#222">LF</span>
<span class="t " style="left:922.5px;top:535px;transform:scaleX(0.8226);color:#222">UTF-8</span>
<span class="t " style="left:951px;top:535px;transform:scaleX(0.8234);color:#222">4 spaces</span>
<svg style="left:988px;top:537.5px" width="6" height="7" viewBox="0 0 6 7"><path d="M.8 3V1.800a1.600 1.600 0 0 1 3 0" fill="none" stroke="#6e6e6e" stroke-width=".8"/><rect x="1.500" y="3" width="4.500" height="3.800" fill="#6e6e6e"/></svg>
<svg style="left:1004px;top:538px" width="8" height="6" viewBox="0 0 8 6"><path d="M0 0h3.500v6H0zM4.500 0H8v6H4.500z" fill="#6e6e6e"/></svg>
<span class="vt" style="left:2.1999999999999993px;top:80px;transform-origin:0 0;transform:rotate(-90deg) scaleX(0.8443);font-size:7.8px;color:#333">Project</span>
<span class="vt" style="left:2.1999999999999993px;top:166px;transform-origin:0 0;transform:rotate(-90deg) scaleX(0.8973);font-size:7.8px;color:#333">Resource Manager</span>
<span class="vt" style="left:2.1999999999999993px;top:372.5px;transform-origin:0 0;transform:rotate(-90deg) scaleX(0.8755);font-size:7.8px;color:#333">Structure</span>
<span class="vt" style="left:2.1999999999999993px;top:431.5px;transform-origin:0 0;transform:rotate(-90deg) scaleX(0.8385);font-size:7.8px;color:#333">Bookmarks</span>
<span class="vt" style="left:2.1999999999999993px;top:498.8px;transform-origin:0 0;transform:rotate(-90deg) scaleX(0.8584);font-size:7.8px;color:#333">Build Variants</span>
<span class="vt" style="left:1017.7px;top:71.3px;transform-origin:0 0;transform:rotate(90deg) scaleX(0.8971);font-size:7.8px;color:#333">Notifications</span>
<span class="vt" style="left:1017.7px;top:137.3px;transform-origin:0 0;transform:rotate(90deg) scaleX(0.9052);font-size:7.8px;color:#333">Device Manager</span>
<span class="vt" style="left:1017.7px;top:214.4px;transform-origin:0 0;transform:rotate(90deg) scaleX(0.7861);font-size:7.8px;color:#333">Gradle</span>
<span class="vt" style="left:1017.7px;top:372px;transform-origin:0 0;transform:rotate(90deg) scaleX(0.8532);font-size:7.8px;color:#333">Running Devices</span>
<span class="vt" style="left:1017.7px;top:452px;transform-origin:0 0;transform:rotate(90deg) scaleX(0.8500);font-size:7.8px;color:#333">Device File Explorer</span>
<svg style="left:3.5px;top:84px" width="7" height="6" viewBox="0 0 7 6"><path d="M0 0h3l.8 1H7v5H0z" fill="#5e5e5e"/></svg>
<svg style="left:3.5px;top:169.5px" width="7" height="7" viewBox="0 0 7 7"><path d="M3.500 0l2 3h-4z" fill="#6e6e6e"/><rect x="0" y="4" width="3" height="3" fill="#6e6e6e"/><circle cx="5.500" cy="5.500" r="1.500" fill="#6e6e6e"/></svg>
<svg style="left:4px;top:377.5px" width="6" height="7" viewBox="0 0 6 7"><rect x="0" y="0" width="2.500" height="2.500" fill="#6e6e6e"/><rect x="3.500" y="2" width="2.500" height="2" fill="#6e6e6e"/><rect x="3.500" y="5" width="2.500" height="2" fill="#6e6e6e"/></svg>
<svg style="left:4.5px;top:434.5px" width="5" height="7" viewBox="0 0 5 7"><path d="M0 0h5v7L2.500 5 0 7z" fill="#6e6e6e"/></svg>
<svg style="left:3.5px;top:502px" width="7" height="6" viewBox="0 0 7 6"><path d="M0 6C.2 3.200 1.500 1.200 3.500 1.200S6.800 3.200 7 6z" fill="#6e6e6e"/></svg>
<svg style="left:1008.5px;top:61px" width="8" height="8" viewBox="0 0 8 8"><path d="M1 6C1 3 2 1.500 4 1.500S7 3 7 6l.8 1H.2z" fill="#6e6e6e" transform="rotate(20 4 4)"/><circle cx="6.500" cy="1.500" r="1.500" fill="#389fd6"/></svg>
<svg style="left:1008.5px;top:124.5px" width="7" height="7.5" viewBox="0 0 7 7.5"><rect x=".5" y="1" width="4.500" height="6" fill="none" stroke="#6e6e6e" stroke-width="1"/><path d="M3.500 0h3.500v3.500" fill="none" stroke="#6e6e6e" stroke-width=".8"/></svg>
<svg style="left:1008px;top:202.5px" width="8" height="7" viewBox="0 0 8 7"><path d="M0 6.500C0 3.500 1.500 2.200 3.300 2.800 4.800 3.300 5.500 2.600 5.800 1 6 .2 7.200 0 7.700.9 8.300 2 7.700 3.400 7 4L6.600 6.500H5.100L4.800 5.200H2.600L2.200 6.500z" fill="#6e6e6e"/></svg>
<svg style="left:1008.5px;top:360.5px" width="7" height="7.5" viewBox="0 0 7 7.5"><rect x=".5" y="1.500" width="4" height="5.500" fill="none" stroke="#6e6e6e" stroke-width=".9"/><path d="M4 0a3 3 0 0 1 3 3" fill="none" stroke="#6e6e6e" stroke-width=".8"/></svg>
<svg style="left:1008.5px;top:440.5px" width="7" height="7" viewBox="0 0 7 7"><rect x=".5" y=".5" width="5.500" height="6" fill="none" stroke="#6e6e6e" stroke-width="1"/></svg>
<svg style="left:159.5px;top:16.4px" width="130.9" height="23.9" viewBox="0 0 130.9 23.9"><rect x="1.2" y="1.2" width="128.50" height="21.50" fill="none" stroke="#c6222c" stroke-width="2.4"/></svg>
<svg style="left:48.2px;top:96px" width="105.0" height="19.6" viewBox="0 0 105.0 19.6"><rect x="1.2" y="1.2" width="102.60" height="17.20" fill="none" stroke="#c6222c" stroke-width="2.4"/></svg>
<svg style="left:59px;top:134.2px" width="78.7" height="19.9" viewBox="0 0 78.7 19.9"><rect x="1.2" y="1.2" width="76.30" height="17.50" fill="none" stroke="#c6222c" stroke-width="2.4"/></svg>
<svg style="left:53.3px;top:214.6px" width="104.8" height="18.8" viewBox="0 0 104.8 18.8"><rect x="1.2" y="1.2" width="102.40" height="16.40" fill="none" stroke="#c6222c" stroke-width="2.4"/></svg>
<svg style="left:34.7px;top:294.7px" width="134.9" height="19.5" viewBox="0 0 134.9 19.5"><rect x="1.2" y="1.2" width="132.50" height="17.10" fill="none" stroke="#c6222c" stroke-width="2.4"/></svg>
<span class="num" style="left:295.8px;top:19.5px;font-size:15.3px">5</span>
<span class="num" style="left:161.7px;top:96.5px">1</span>
<span class="num" style="left:148.5px;top:133.89999999999998px">2</span>
<span class="num" style="left:169px;top:215.7px">3</span>
<span class="num" style="left:182.8px;top:295.3px">4</span>
</div></div></body></html>
